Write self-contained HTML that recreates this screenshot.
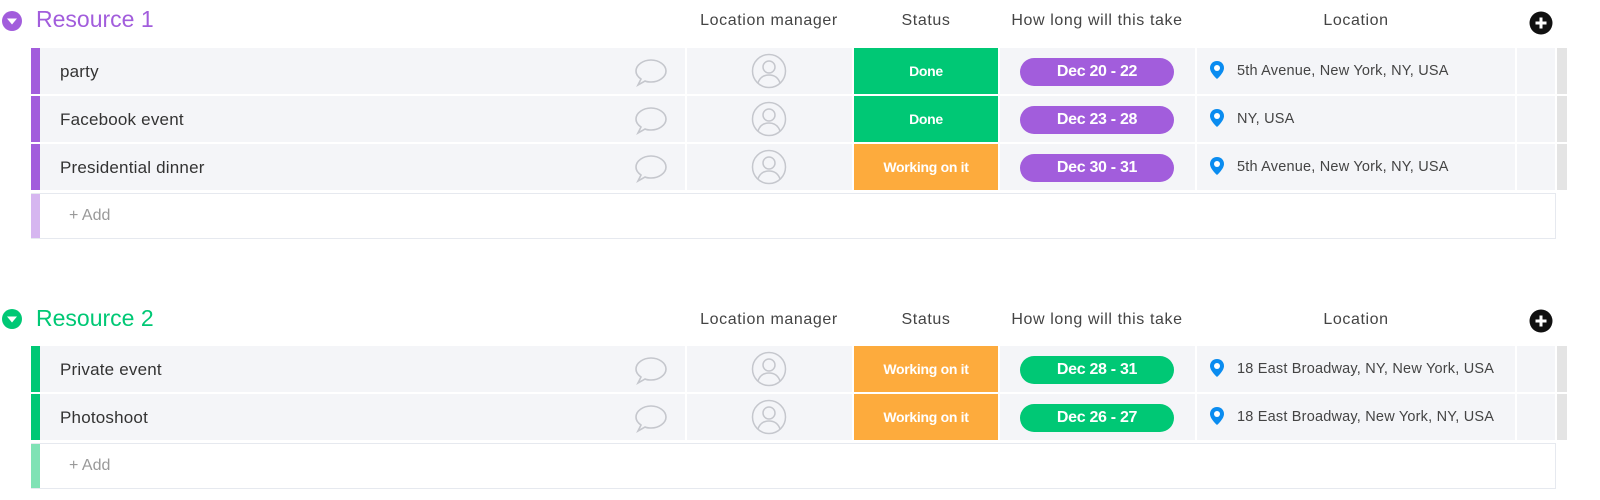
<!DOCTYPE html>
<html><head><meta charset="utf-8"><style>
body{margin:0;width:1600px;height:500px;background:#fff;position:relative;overflow:hidden;font-family:"Liberation Sans",sans-serif;}
.a{position:absolute}
.t{position:absolute;font-size:23px;top:6px;left:36px;letter-spacing:0px}
.h{position:absolute;font-size:16px;color:#444;transform:translateX(-50%);white-space:nowrap;letter-spacing:0.6px}
.row{position:absolute;left:31px;width:1536px;height:46px}
.row>div{position:absolute;top:0;height:46px;background:#f4f5f8}
.bar{left:0;width:9px}
.nm{left:9px;width:645px;font-size:17px;color:#333;line-height:48px;text-indent:20px;letter-spacing:0.2px}
.pe{left:656px;width:165px}
.st{left:823px;width:144px;color:#fff;font-weight:bold;font-size:14px;text-align:center;line-height:46px;letter-spacing:-0.3px}
.tm{left:969px;width:195px}
.lo{left:1166px;width:318px;font-size:14.5px;color:#444;line-height:46px;letter-spacing:0.2px}
.bl{left:1486px;width:38px}
.sp{left:1526px;width:10px;background:#e4e4e4 !important}
.pill{position:absolute;left:20px;top:10px;width:154px;height:28px;border-radius:14px;color:#fff;font-weight:bold;font-size:16px;text-align:center;line-height:28px;letter-spacing:-0.3px}
.add{position:absolute;left:31px;width:1524px;height:44px;border:1px solid #e6e9ef;border-left:none;background:#fff}
.add .b{position:absolute;left:0;top:0;width:9px;height:44px}
.add span{position:absolute;left:38px;top:13px;font-size:16px;color:#999}
</style></head><body>

<svg class="a" style="left:1px;top:10px" width="22" height="22"><circle cx="11" cy="11" r="10" fill="#a25ddc"/><path d="M6 8.5h10l-5 6z" fill="#fff"/></svg>
<div class="t" style="color:#a25ddc">Resource 1</div>
<div class="h" style="left:769px;top:12px">Location manager</div>
<div class="h" style="left:926px;top:12px">Status</div>
<div class="h" style="left:1097px;top:12px">How long will this take</div>
<div class="h" style="left:1356px;top:12px">Location</div>
<svg class="a" style="left:1529px;top:11px" width="24" height="24"><circle cx="12" cy="12" r="11.5" fill="#111"/><path d="M12 6.5v11M6.5 12h11" stroke="#fff" stroke-width="3"/></svg>

<svg width="0" height="0" style="position:absolute"><defs>
<g id="cm"><path d="M17 3c8 0 15 5 15 11s-7 11-15 11c-2 0-4 0-6-1l-7 4 3-6C4 20 2 17 2 14 2 8 9 3 17 3z" fill="none" stroke="#c5c7cd" stroke-width="1.6"/></g>
<g id="pp"><circle cx="18" cy="18" r="16.5" fill="none" stroke="#c5c7cd" stroke-width="1.5"/><circle cx="18" cy="14" r="6" fill="none" stroke="#c5c7cd" stroke-width="1.5"/><path d="M7 30c2-6 6-8 11-8s9 2 11 8" fill="none" stroke="#c5c7cd" stroke-width="1.5"/></g>
<g id="pin"><path d="M8 1C4 1 1 4 1 8c0 5 7 11 7 11s7-6 7-11c0-4-3-7-7-7z" fill="#0a8cf0"/><circle cx="8" cy="8" r="3" fill="#fff"/></g>
</defs></svg>

<div class="row" style="top:48px"><div class="bar" style="background:#a25ddc"></div><div class="nm">party<svg class="a" style="left:594px;top:9px" width="36" height="32"><use href="#cm"/></svg></div><div class="pe"><svg class="a" style="left:64px;top:5px" width="36" height="36"><use href="#pp"/></svg></div><div class="st" style="background:#00c875">Done</div><div class="tm"><div class="pill" style="background:#a25ddc">Dec 20 - 22</div></div><div class="lo"><svg class="a" style="left:12px;top:12px" width="16" height="20"><use href="#pin"/></svg><span style="position:absolute;left:40px">5th Avenue, New York, NY, USA</span></div><div class="bl"></div><div class="sp"></div></div>

<div class="row" style="top:96px"><div class="bar" style="background:#a25ddc"></div><div class="nm">Facebook event<svg class="a" style="left:594px;top:9px" width="36" height="32"><use href="#cm"/></svg></div><div class="pe"><svg class="a" style="left:64px;top:5px" width="36" height="36"><use href="#pp"/></svg></div><div class="st" style="background:#00c875">Done</div><div class="tm"><div class="pill" style="background:#a25ddc">Dec 23 - 28</div></div><div class="lo"><svg class="a" style="left:12px;top:12px" width="16" height="20"><use href="#pin"/></svg><span style="position:absolute;left:40px">NY, USA</span></div><div class="bl"></div><div class="sp"></div></div>

<div class="row" style="top:144px"><div class="bar" style="background:#a25ddc"></div><div class="nm">Presidential dinner<svg class="a" style="left:594px;top:9px" width="36" height="32"><use href="#cm"/></svg></div><div class="pe"><svg class="a" style="left:64px;top:5px" width="36" height="36"><use href="#pp"/></svg></div><div class="st" style="background:#fdab3d">Working on it</div><div class="tm"><div class="pill" style="background:#a25ddc">Dec 30 - 31</div></div><div class="lo"><svg class="a" style="left:12px;top:12px" width="16" height="20"><use href="#pin"/></svg><span style="position:absolute;left:40px">5th Avenue, New York, NY, USA</span></div><div class="bl"></div><div class="sp"></div></div>

<div class="add" style="top:193px"><div class="b" style="background:#d6b6f0"></div><span>+ Add</span></div>

<svg class="a" style="left:1px;top:308px" width="22" height="22"><circle cx="11" cy="11" r="10" fill="#00c875"/><path d="M6 8.5h10l-5 6z" fill="#fff"/></svg>
<div class="t" style="color:#00c875;top:305px">Resource 2</div>
<div class="h" style="left:769px;top:311px">Location manager</div>
<div class="h" style="left:926px;top:311px">Status</div>
<div class="h" style="left:1097px;top:311px">How long will this take</div>
<div class="h" style="left:1356px;top:311px">Location</div>
<svg class="a" style="left:1529px;top:309px" width="24" height="24"><circle cx="12" cy="12" r="11.5" fill="#111"/><path d="M12 6.5v11M6.5 12h11" stroke="#fff" stroke-width="3"/></svg>

<div class="row" style="top:346px"><div class="bar" style="background:#00c875"></div><div class="nm">Private event<svg class="a" style="left:594px;top:9px" width="36" height="32"><use href="#cm"/></svg></div><div class="pe"><svg class="a" style="left:64px;top:5px" width="36" height="36"><use href="#pp"/></svg></div><div class="st" style="background:#fdab3d">Working on it</div><div class="tm"><div class="pill" style="background:#00c875">Dec 28 - 31</div></div><div class="lo"><svg class="a" style="left:12px;top:12px" width="16" height="20"><use href="#pin"/></svg><span style="position:absolute;left:40px">18 East Broadway, NY, New York, USA</span></div><div class="bl"></div><div class="sp"></div></div>

<div class="row" style="top:394px"><div class="bar" style="background:#00c875"></div><div class="nm">Photoshoot<svg class="a" style="left:594px;top:9px" width="36" height="32"><use href="#cm"/></svg></div><div class="pe"><svg class="a" style="left:64px;top:5px" width="36" height="36"><use href="#pp"/></svg></div><div class="st" style="background:#fdab3d">Working on it</div><div class="tm"><div class="pill" style="background:#00c875">Dec 26 - 27</div></div><div class="lo"><svg class="a" style="left:12px;top:12px" width="16" height="20"><use href="#pin"/></svg><span style="position:absolute;left:40px">18 East Broadway, New York, NY, USA</span></div><div class="bl"></div><div class="sp"></div></div>

<div class="add" style="top:443px"><div class="b" style="background:#80e2b5"></div><span>+ Add</span></div>

</body></html>
